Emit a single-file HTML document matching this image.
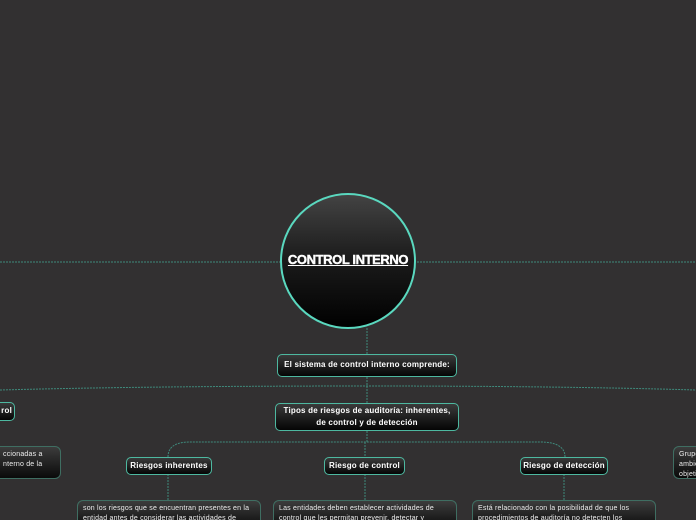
<!DOCTYPE html>
<html><head><meta charset="utf-8"><style>
html,body{margin:0;width:696px;height:520px;overflow:hidden}
body{background:#323031;font-family:"Liberation Sans",sans-serif;position:relative}
.b{position:absolute;box-sizing:border-box;border:1.5px solid #4db8a0;border-radius:5px;background:linear-gradient(#3a3a3a,#050505);color:#fff;font-weight:bold;font-size:8px;text-align:center;line-height:12px;white-space:nowrap;letter-spacing:0.2px}
.d{position:absolute;box-sizing:border-box;border:1.5px solid #3f6e62;border-radius:6px;background:linear-gradient(#3c3c3c,#0a0a0a);color:#eee;font-size:7px;line-height:10px;padding:3px 5px;overflow:hidden;white-space:nowrap;letter-spacing:0.2px}
svg{position:absolute;left:0;top:0}
</style></head><body>
<svg width="696" height="520">
<g stroke="#3f8a7c" stroke-width="1" fill="none" stroke-dasharray="2,1">
<line x1="0" y1="262" x2="282" y2="262"/><line x1="414" y1="262" x2="696" y2="262"/>
<line x1="367" y1="328" x2="367" y2="354"/><line x1="367" y1="377" x2="367" y2="403"/>
<path d="M0 390 Q150 386 367 386 Q560 386 696 390"/>
<line x1="367" y1="431" x2="367" y2="442"/>
<path d="M168 457 Q168 442 190 442 L540 442 Q565 442 565 457"/>
<line x1="365" y1="442" x2="365" y2="457"/>
<line x1="168" y1="474" x2="168" y2="500"/><line x1="365" y1="474" x2="365" y2="500"/><line x1="564" y1="474" x2="564" y2="500"/>
</g>
<defs><linearGradient id="g" x1="0" y1="0" x2="0" y2="1"><stop offset="0" stop-color="#444"/><stop offset="0.5" stop-color="#1a1a1a"/><stop offset="1" stop-color="#000"/></linearGradient></defs>
<circle cx="348" cy="261" r="67" fill="url(#g)" stroke="#5ad8bf" stroke-width="2"/>
</svg>
<div style="position:absolute;left:282px;top:252px;width:132px;text-align:center;color:#fff;font-weight:900;font-size:13px;text-decoration:underline;letter-spacing:-0.4px;-webkit-text-stroke:0.4px #fff">CONTROL INTERNO</div>
<div class="b" style="left:277px;top:354px;width:180px;height:23px;line-height:20px">El sistema de control interno comprende:</div>
<div class="b" style="left:275px;top:403px;width:184px;height:28px;padding-top:1px">Tipos de riesgos de auditoría: inherentes,<br>de control y de detección</div>
<div class="b" style="left:-20px;top:402px;width:35px;height:19px;line-height:16px;text-align:right;padding-right:2px">rol</div>
<div class="d" style="left:-20px;top:446px;width:81px;height:33px;padding-left:22px">ccionadas a<br>nterno de la</div>
<div class="b" style="left:126px;top:457px;width:86px;height:18px;line-height:15px">Riesgos inherentes</div>
<div class="b" style="left:324px;top:457px;width:81px;height:18px;line-height:15px">Riesgo de control</div>
<div class="b" style="left:520px;top:457px;width:88px;height:18px;line-height:15px">Riesgo de detección</div>
<div class="d" style="left:673px;top:446px;width:40px;height:33px">Grupo<br>ambie<br>objeti</div>
<div class="d" style="left:77px;top:500px;width:184px;height:30px">son los riesgos que se encuentran presentes en la<br>entidad antes de considerar las actividades de</div>
<div class="d" style="left:273px;top:500px;width:184px;height:30px">Las entidades deben establecer actividades de<br>control que les permitan prevenir, detectar y</div>
<div class="d" style="left:472px;top:500px;width:184px;height:30px">Está relacionado con la posibilidad de que los<br>procedimientos de auditoría no detecten los</div>
</body></html>
